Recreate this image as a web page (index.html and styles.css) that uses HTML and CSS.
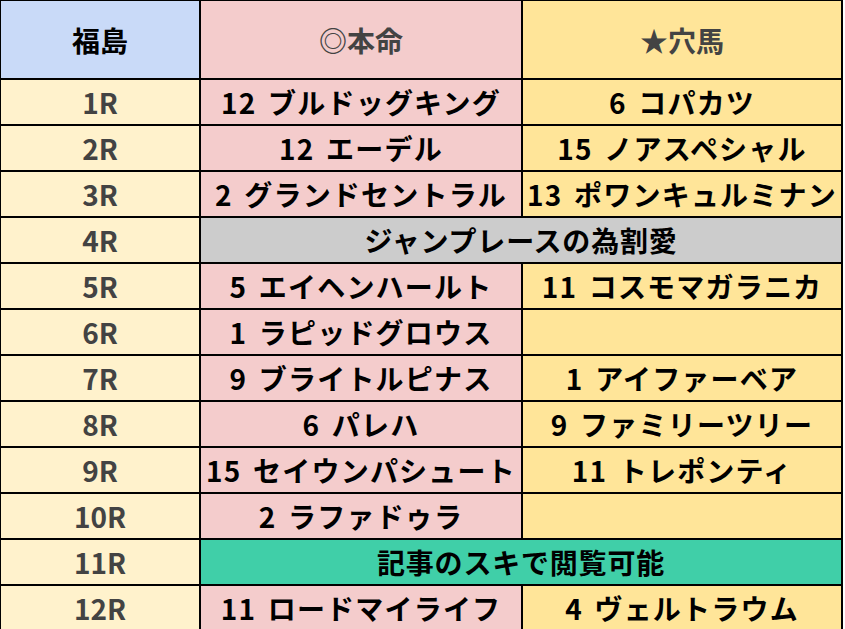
FILE: index.html
```html
<!DOCTYPE html>
<html lang="ja">
<head>
<meta charset="utf-8">
<title>福島 予想</title>
<link rel="stylesheet" href="styles.css">
</head>
<body>
<div class="sheet">
  <div class="cell head-venue">福島</div>
  <div class="cell head-main">◎本命</div>
  <div class="cell head-dark">★穴馬</div>

  <div class="cell race">1R</div>
  <div class="cell main">12 ブルドッグキング</div>
  <div class="cell dark">6 コパカツ</div>

  <div class="cell race">2R</div>
  <div class="cell main">12 エーデル</div>
  <div class="cell dark">15 ノアスペシャル</div>

  <div class="cell race">3R</div>
  <div class="cell main">2 グランドセントラル</div>
  <div class="cell dark">13 ポワンキュルミナン</div>

  <div class="cell race">4R</div>
  <div class="cell skip span2">ジャンプレースの為割愛</div>

  <div class="cell race">5R</div>
  <div class="cell main">5 エイヘンハールト</div>
  <div class="cell dark">11 コスモマガラニカ</div>

  <div class="cell race">6R</div>
  <div class="cell main">1 ラピッドグロウス</div>
  <div class="cell dark"></div>

  <div class="cell race">7R</div>
  <div class="cell main">9 ブライトルピナス</div>
  <div class="cell dark">1 アイファーベア</div>

  <div class="cell race">8R</div>
  <div class="cell main">6 パレハ</div>
  <div class="cell dark">9 ファミリーツリー</div>

  <div class="cell race">9R</div>
  <div class="cell main">15 セイウンパシュート</div>
  <div class="cell dark">11 トレポンティ</div>

  <div class="cell race">10R</div>
  <div class="cell main">2 ラファドゥラ</div>
  <div class="cell dark"></div>

  <div class="cell race">11R</div>
  <div class="cell paid span2">記事のスキで閲覧可能</div>

  <div class="cell race">12R</div>
  <div class="cell main">11 ロードマイライフ</div>
  <div class="cell dark">4 ヴェルトラウム</div>
</div>
</body>
</html>
```

FILE: styles.css
```css
html, body {
  margin: 0;
  padding: 0;
  background: #ffffff;
  overflow: hidden;
}

.sheet {
  display: grid;
  grid-template-columns: 198px 320px 318px;
  grid-template-rows: 77px repeat(12, 44px);
  gap: 2px;
  padding: 2px;
  margin: -1px 0 0 -1px;
  width: max-content;
  background: #000000;
  font-family: "Noto Sans CJK JP", "Noto Sans", sans-serif;
  font-weight: 700;
  font-size: 28px;
}

.cell {
  display: flex;
  align-items: center;
  justify-content: center;
  line-height: 1;
  white-space: nowrap;
  color: #000000;
}

.span2 {
  grid-column: span 2;
}

.head-venue {
  background: #c9daf8;
  color: #000000;
}

.head-main {
  background: #f4cccc;
  color: #434343;
}

.head-dark {
  background: #ffe599;
  color: #434343;
}

.race {
  background: #fff2cc;
  color: #434343;
}

.main,
.dark,
.skip,
.paid {
  letter-spacing: 1.2px;
  word-spacing: 4px;
}

.skip,
.paid {
  letter-spacing: 0.8px;
}

.main {
  background: #f4cccc;
}

.dark {
  background: #ffe599;
}

.skip {
  background: #cccccc;
}

.paid {
  background: #40cfa8;
}
```
